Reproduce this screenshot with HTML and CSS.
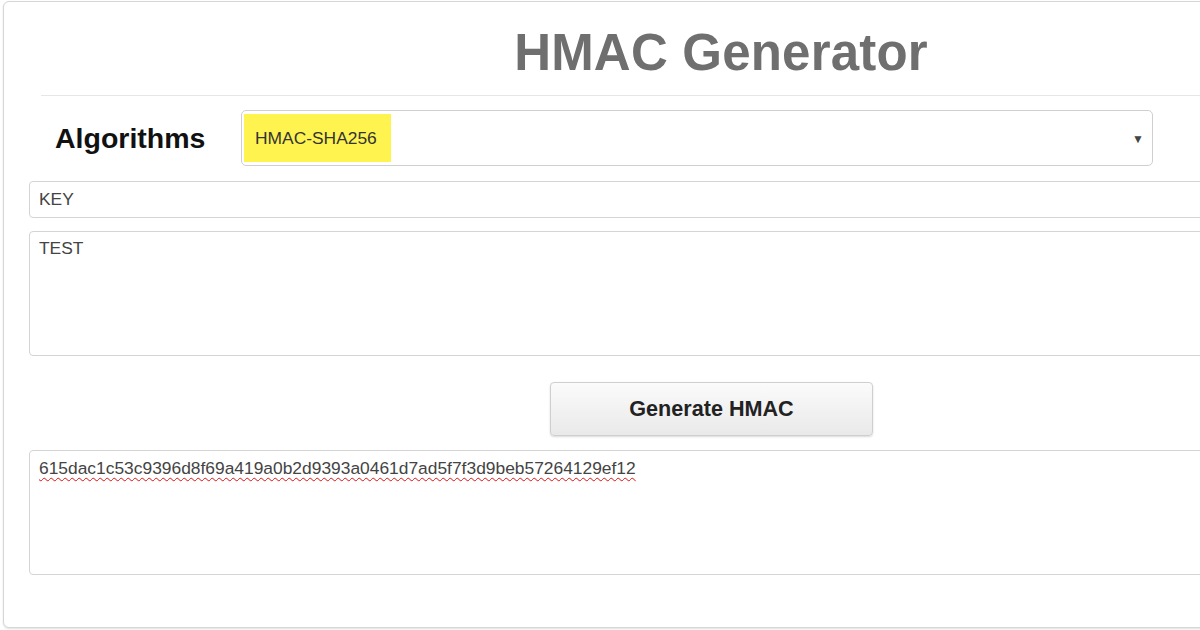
FILE: index.html
```html
<!DOCTYPE html>
<html>
<head>
<meta charset="utf-8">
<link rel="stylesheet" href="styles.css">
</head>
<body>
<div class="card">
  <div class="header">
    <h1 class="title">HMAC Generator</h1>
  </div>
  <div class="algo-row">
    <div class="algo-label">Algorithms</div>
    <div class="select">
      <span class="select-value">HMAC-SHA256</span>
      <span class="select-arrow">▼</span>
    </div>
  </div>
  <div class="field key">KEY</div>
  <div class="field area">TEST</div>
  <div class="btn-row">
    <div class="btn">Generate HMAC</div>
  </div>
  <div class="field area out"><span class="hash">615dac1c53c9396d8f69a419a0b2d9393a0461d7ad5f7f3d9beb57264129ef12</span></div>
</div>
</body>
</html>
```
FILE: styles.css
```css
html, body {
  margin: 0;
  padding: 0;
  background: #ffffff;
  overflow: hidden;
  width: 1200px;
  height: 630px;
}
body {
  font-family: "Liberation Sans", Arial, sans-serif;
}
.card {
  margin: 1px 0 0 3px;
  width: 1400px;
  height: 627px;
  box-sizing: border-box;
  border: 1px solid #d6d6d6;
  border-radius: 6px;
  box-shadow: 0 1px 2px rgba(0,0,0,0.12);
  padding: 0 0 0 25px;
  background: #fff;
}
.header {
  margin-left: 12px;
  width: 1360px;
  border-bottom: 1px solid #e6e6e6;
  height: 94px;
  box-sizing: border-box;
}
.title {
  margin: 0;
  padding-top: 24px;
  text-align: center;
  font-size: 51px;
  line-height: 54px;
  font-weight: bold;
  color: #6f6f6f;
  letter-spacing: 0.2px;
}
.algo-row {
  display: flex;
  align-items: center;
  margin-top: 14px;
  height: 56px;
}
.algo-label {
  width: 212px;
  padding-left: 26px;
  box-sizing: border-box;
  font-size: 28.5px;
  font-weight: bold;
  color: #111;
}
.select {
  width: 912px;
  height: 56px;
  box-sizing: border-box;
  border: 1px solid #cfcfcf;
  border-radius: 5px;
  display: flex;
  align-items: center;
  justify-content: space-between;
  padding: 3px 8px 3px 2px;
}
.select-value {
  background: #fff350;
  height: 48px;
  display: flex;
  align-items: center;
  padding: 0 14px 0 11px;
  font-size: 17.4px;
  color: #333;
}
.select-arrow {
  font-size: 12px;
  color: #444;
  margin-top: 1px;
}
.field {
  width: 1300px;
  box-sizing: border-box;
  border: 1px solid #d4d4d4;
  border-radius: 4px;
  font-size: 17.4px;
  color: #444;
  padding: 0 9px;
}
.key {
  margin-top: 15px;
  height: 37px;
  line-height: 34px;
}
.area {
  margin-top: 13px;
  height: 125px;
  padding-top: 6px;
  line-height: 20px;
}
.btn-row {
  margin-top: 26px;
  padding-left: 521px;
  height: 54px;
}
.btn {
  width: 323px;
  height: 54px;
  box-sizing: border-box;
  border: 1px solid #cfcfcf;
  border-radius: 4px;
  background: linear-gradient(#fbfbfb, #e9e9e9);
  box-shadow: 0 1px 2px rgba(0,0,0,0.15);
  display: flex;
  align-items: center;
  justify-content: center;
  font-size: 21.6px;
  font-weight: bold;
  color: #222;
}
.out {
  margin-top: 14px;
  padding-top: 7px;
}
.hash {
  text-decoration: underline wavy #e01010;
  text-decoration-thickness: 1px;
  text-underline-offset: 3px;
}
```
